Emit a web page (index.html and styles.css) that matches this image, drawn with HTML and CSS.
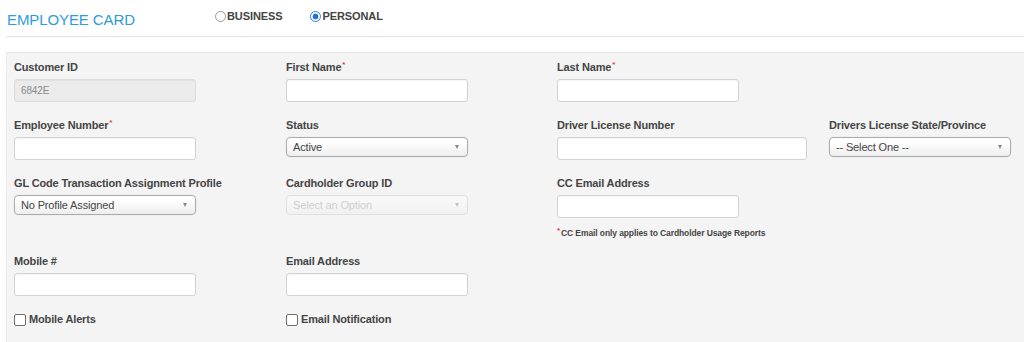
FILE: index.html
```html
<!DOCTYPE html>
<html lang="en">
<head>
<meta charset="utf-8">
<title>Employee Card</title>
<link rel="stylesheet" href="styles.css">
</head>
<body>
<header class="card-header">
  <h1 class="title">EMPLOYEE CARD</h1>
  <div class="type-switch">
    <label class="radio"><input type="radio" name="cardtype">BUSINESS</label>
    <label class="radio"><input type="radio" name="cardtype" checked>PERSONAL</label>
  </div>
</header>

<section class="panel">
  <div class="grid">
    <div class="field">
      <label class="lbl">Customer ID</label>
      <input class="txt" type="text" value="6842E" disabled>
    </div>
    <div class="field">
      <label class="lbl">First Name<span class="req">*</span></label>
      <input class="txt" type="text">
    </div>
    <div class="field">
      <label class="lbl">Last Name<span class="req">*</span></label>
      <input class="txt" type="text">
    </div>
    <div class="field"></div>

    <div class="field">
      <label class="lbl">Employee Number<span class="req">*</span></label>
      <input class="txt" type="text">
    </div>
    <div class="field">
      <label class="lbl">Status</label>
      <span class="sel"><select><option>Active</option></select></span>
    </div>
    <div class="field">
      <label class="lbl">Driver License Number</label>
      <input class="txt wide" type="text">
    </div>
    <div class="field">
      <label class="lbl">Drivers License State/Province</label>
      <span class="sel"><select><option>-- Select One --</option></select></span>
    </div>

    <div class="field">
      <label class="lbl">GL Code Transaction Assignment Profile</label>
      <span class="sel"><select><option>No Profile Assigned</option></select></span>
    </div>
    <div class="field">
      <label class="lbl">Cardholder Group ID</label>
      <span class="sel disabled"><select disabled><option>Select an Option</option></select></span>
    </div>
    <div class="field">
      <label class="lbl">CC Email Address</label>
      <input class="txt" type="text">
      <p class="hint"><span class="req">*</span>CC Email only applies to Cardholder Usage Reports</p>
    </div>
    <div class="field"></div>

    <div class="field">
      <label class="lbl">Mobile #</label>
      <input class="txt" type="text">
    </div>
    <div class="field">
      <label class="lbl">Email Address</label>
      <input class="txt" type="text">
    </div>
    <div class="field"></div>
    <div class="field"></div>

    <div class="field">
      <label class="check"><input type="checkbox">Mobile Alerts</label>
    </div>
    <div class="field">
      <label class="check"><input type="checkbox">Email Notification</label>
    </div>
  </div>
</section>
</body>
</html>
```

FILE: styles.css
```css
* { box-sizing: border-box; }

html, body {
  margin: 0;
  padding: 0;
  background: #ffffff;
  overflow: hidden;
}

body {
  width: 1024px;
  height: 342px;
  font-family: "Liberation Sans", Arial, sans-serif;
  color: #444444;
}

/* ---------- header ---------- */
.card-header {
  display: flex;
  align-items: flex-start;
  height: 37px;
  margin-left: 6px;
  padding-left: 1px;
  border-bottom: 1px solid #e2e2e2;
}

.title {
  width: 208px;
  margin: 0;
  padding-top: 11px;
  font-size: 15px;
  line-height: 18px;
  font-weight: normal;
  color: #2d9cdb;
  letter-spacing: -0.1px;
}

.type-switch {
  display: flex;
  gap: 28px;
  padding-top: 10px;
}

.radio {
  display: inline-flex;
  align-items: center;
  font-size: 11px;
  line-height: 13px;
  font-weight: bold;
  color: #444444;
  letter-spacing: -0.1px;
}

.radio input {
  appearance: none;
  -webkit-appearance: none;
  width: 11px;
  height: 11px;
  margin: 0 1px 0 0;
  border: 1px solid #9c9c9c;
  border-radius: 50%;
  background: #ffffff;
}

.radio input:checked {
  border-color: #2f7fe6;
  background: radial-gradient(circle, #1f6fe0 0 2.6px, #ffffff 3.2px);
}

/* ---------- panel ---------- */
.panel {
  margin: 15px 0 0 6px;
  padding: 7px 0 20px 7px;
  background: #f4f4f4;
  border-top: 1px solid #e6e6e6;
  border-left: 1px solid #ececec;
}

.grid {
  display: grid;
  grid-template-columns: 272px 271px 272px 200px;
  row-gap: 16px;
}

.field {
  display: flex;
  flex-direction: column;
  align-items: flex-start;
}

.lbl {
  display: block;
  margin-bottom: 4px;
  font-size: 11px;
  line-height: 15px;
  font-weight: bold;
  color: #444444;
  letter-spacing: -0.15px;
  white-space: nowrap;
}

.req {
  color: #e3413b;
  font-size: 8px;
  vertical-align: top;
  line-height: 10px;
  margin-left: 1px;
}

.txt {
  width: 182px;
  height: 23px;
  margin: 0;
  padding: 0 6px;
  border: 1px solid #d2d2d2;
  border-radius: 3px;
  background: #ffffff;
  box-shadow: inset 0 1px 1px rgba(0, 0, 0, 0.04);
  font-family: "Liberation Sans", Arial, sans-serif;
  font-size: 10px;
  color: #888888;
  letter-spacing: -0.15px;
}

.txt.wide { width: 250px; }

.txt:disabled {
  background: #ebebeb;
  border-color: #dcdcdc;
  color: #8a8a8a;
}

.sel {
  position: relative;
  display: block;
  width: 182px;
  height: 20px;
}

.sel select {
  appearance: none;
  -webkit-appearance: none;
  width: 100%;
  height: 20px;
  margin: 0;
  padding: 0 20px 0 6px;
  border: 1px solid #ababab;
  border-radius: 4px;
  background: linear-gradient(#ffffff 20%, #eeeeee);
  box-shadow: 0 0 2px rgba(0, 0, 0, 0.08);
  font-family: "Liberation Sans", Arial, sans-serif;
  font-size: 11px;
  color: #444444;
  letter-spacing: -0.15px;
}

.sel::after {
  content: "";
  position: absolute;
  right: 9px;
  top: 8px;
  width: 0;
  height: 0;
  border-left: 2.5px solid transparent;
  border-right: 2.5px solid transparent;
  border-top: 4px solid #888888;
}

.sel.disabled select {
  border-color: #d8d8d8;
  background: linear-gradient(#fafafa 20%, #f0f0f0);
  color: #c0c0c0;
  box-shadow: none;
}

.sel.disabled::after { border-top-color: #c4c4c4; }

.hint {
  margin: 10px 0 0;
  font-size: 8.5px;
  line-height: 10px;
  font-weight: bold;
  color: #444444;
  letter-spacing: -0.1px;
  white-space: nowrap;
}

.hint .req {
  margin: 0 1px 0 0;
  font-size: 8px;
  line-height: 6px;
}

.check {
  display: inline-flex;
  align-items: center;
  gap: 3px;
  font-size: 11px;
  line-height: 15px;
  font-weight: bold;
  color: #444444;
  letter-spacing: -0.15px;
}

.check input {
  appearance: none;
  -webkit-appearance: none;
  width: 12px;
  height: 12px;
  margin: 0;
  border: 1px solid #6f6f6f;
  border-radius: 2px;
  background: #ffffff;
}
```
